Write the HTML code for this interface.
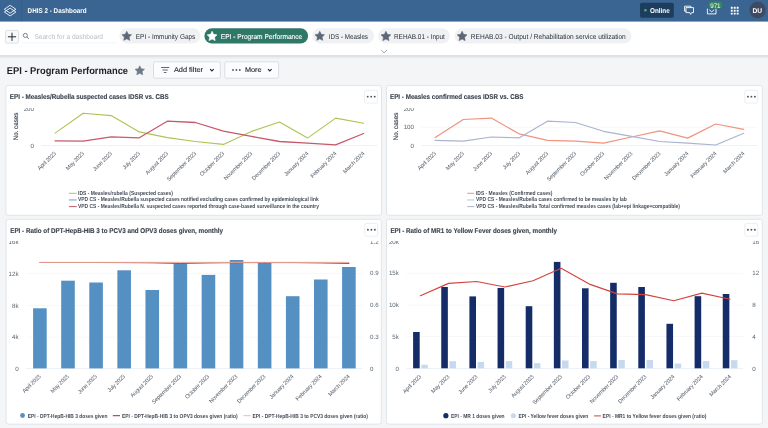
<!DOCTYPE html><html><head><meta charset="utf-8"><title>DHIS 2 - Dashboard</title><style>html,body{margin:0;padding:0;background:#f4f5f7;width:768px;height:428px;overflow:hidden}svg{display:block;will-change:transform;text-rendering:geometricPrecision;font-family:"Liberation Sans",sans-serif}</style></head><body>
<svg width="768" height="428" viewBox="0 0 768 428">
<rect x="0" y="0" width="768" height="428" fill="#f4f5f7"/>
<rect x="0" y="0" width="768" height="21.75" fill="#3a6592"/>
<g fill="none" stroke="#ffffff" stroke-width="0.85" stroke-linejoin="round"><path d="M10.1,5.3 L15.9,9.25 L10.1,13.2 L4.3,9.25 Z"/><path d="M10.1,8.1 L15.9,12.0 L10.1,15.9 L4.3,12.0 Z"/></g>
<line x1="21.5" y1="0" x2="21.5" y2="21.75" stroke="#22557d" stroke-width="0.6" stroke-dasharray="0.8,0.8"/>
<text x="27.60" y="13.00" font-size="7" fill="#ffffff" font-weight="bold" text-anchor="start" textLength="59.00" lengthAdjust="spacingAndGlyphs" >DHIS 2 - Dashboard</text>
<rect x="640" y="2.7" width="33.8" height="15.1" rx="1.8" fill="#1c3d5e"/>
<circle cx="645.4" cy="10.3" r="1.25" fill="#4caf7d"/>
<text x="650.00" y="12.80" font-size="7" fill="#ffffff" font-weight="bold" text-anchor="start" textLength="19.70" lengthAdjust="spacingAndGlyphs" >Online</text>
<g fill="none" stroke="#ffffff" stroke-width="0.9" stroke-linejoin="round"><path d="M684.6,6.2 H690.9 V7.3"/><path d="M686.0,7.6 H693.5 V12.6 H691.6 L690.6,14.4 L689.8,12.6 H686.0 Z"/><path d="M684.6,6.2 V11.2 H686.0"/></g>
<g fill="none" stroke="#ffffff" stroke-width="0.9" stroke-linejoin="round"><path d="M707.4,8.6 V13.9 H716.0 V8.6"/><path d="M709.3,9.8 L711.7,11.8 L714.1,9.8"/></g>
<rect x="708.6" y="1.6" width="13.6" height="6.8" rx="3.4" fill="#37865c"/>
<text x="715.40" y="7.50" font-size="6.6" fill="#ffffff" text-anchor="middle" textLength="10.40" lengthAdjust="spacingAndGlyphs" >971</text>
<rect x="730.80" y="6.80" width="1.9" height="1.9" rx="0.3" fill="#ffffff"/>
<rect x="730.80" y="9.75" width="1.9" height="1.9" rx="0.3" fill="#ffffff"/>
<rect x="730.80" y="12.70" width="1.9" height="1.9" rx="0.3" fill="#ffffff"/>
<rect x="733.75" y="6.80" width="1.9" height="1.9" rx="0.3" fill="#ffffff"/>
<rect x="733.75" y="9.75" width="1.9" height="1.9" rx="0.3" fill="#ffffff"/>
<rect x="733.75" y="12.70" width="1.9" height="1.9" rx="0.3" fill="#ffffff"/>
<rect x="736.70" y="6.80" width="1.9" height="1.9" rx="0.3" fill="#ffffff"/>
<rect x="736.70" y="9.75" width="1.9" height="1.9" rx="0.3" fill="#ffffff"/>
<rect x="736.70" y="12.70" width="1.9" height="1.9" rx="0.3" fill="#ffffff"/>
<circle cx="757.6" cy="10.1" r="8.25" fill="#3e4a64"/>
<text x="757.30" y="12.55" font-size="6.8" fill="#ffffff" font-weight="bold" text-anchor="middle" textLength="9.60" lengthAdjust="spacingAndGlyphs" >DU</text>
<rect x="0" y="21.75" width="768" height="33.65" fill="#ffffff"/>
<rect x="0" y="55.4" width="768" height="1.0" fill="#cdd1d6"/>
<rect x="0" y="56.4" width="768" height="1.0" fill="#dcdfe3"/>
<rect x="0" y="57.4" width="768" height="1.0" fill="#e9ecef"/>
<rect x="5.5" y="30.35" width="13.0" height="12.8" rx="1.6" fill="#f8f9fa" stroke="#c9cfd6" stroke-width="0.6"/>
<path d="M12.0,32.7 V40.9 M7.9,36.8 H16.1" stroke="#212934" stroke-width="1.0"/>
<g fill="none" stroke="#6b7480" stroke-width="0.9"><circle cx="25.35" cy="35.4" r="2.05"/><path d="M26.85,36.9 L28.9,38.95"/></g>
<text x="34.40" y="38.80" font-size="7.0" fill="#b8bdc4" text-anchor="start" textLength="68.60" lengthAdjust="spacingAndGlyphs" >Search for a dashboard</text>
<rect x="22" y="42.6" width="95" height="0.6" fill="#e8edf2"/>
<rect x="119.4" y="28.3" width="81.10" height="15.30" rx="7.65" fill="#eff1f3"/>
<path d="M126.75,31.30 L128.22,34.27 L131.50,34.75 L129.12,37.07 L129.69,40.33 L126.75,38.79 L123.81,40.33 L124.38,37.07 L122.00,34.75 L125.28,34.27Z" fill="#5d6777" stroke="#5d6777" stroke-width="0.6" stroke-linejoin="round"/>
<text x="135.80" y="38.75" font-size="7.1" fill="#28303a" text-anchor="start" textLength="59.50" lengthAdjust="spacingAndGlyphs" >EPI - Immunity Gaps</text>
<rect x="204.4" y="28.3" width="103.70" height="15.30" rx="7.65" fill="#2f7867"/>
<path d="M212.10,31.30 L213.61,34.37 L217.00,34.86 L214.55,37.25 L215.13,40.62 L212.10,39.03 L209.07,40.62 L209.65,37.25 L207.20,34.86 L210.59,34.37Z" fill="#ffffff" stroke="#ffffff" stroke-width="0.6" stroke-linejoin="round"/>
<text x="220.80" y="38.75" font-size="7.1" fill="#ffffff" stroke="#ffffff" stroke-width="0.12" text-anchor="start" textLength="81.40" lengthAdjust="spacingAndGlyphs" >EPI - Program Performance</text>
<rect x="312.4" y="28.3" width="61.60" height="15.30" rx="7.65" fill="#eff1f3"/>
<path d="M319.75,31.30 L321.22,34.27 L324.50,34.75 L322.12,37.07 L322.69,40.33 L319.75,38.79 L316.81,40.33 L317.38,37.07 L315.00,34.75 L318.28,34.27Z" fill="#5d6777" stroke="#5d6777" stroke-width="0.6" stroke-linejoin="round"/>
<text x="328.80" y="38.75" font-size="7.1" fill="#28303a" text-anchor="start" textLength="39.20" lengthAdjust="spacingAndGlyphs" >IDS - Measles</text>
<rect x="378.2" y="28.3" width="71.50" height="15.30" rx="7.65" fill="#eff1f3"/>
<path d="M385.90,31.30 L387.41,34.37 L390.80,34.86 L388.35,37.25 L388.93,40.62 L385.90,39.03 L382.87,40.62 L383.45,37.25 L381.00,34.86 L384.39,34.37Z" fill="#5d6777" stroke="#5d6777" stroke-width="0.6" stroke-linejoin="round"/>
<text x="394.00" y="38.75" font-size="7.1" fill="#28303a" text-anchor="start" textLength="50.90" lengthAdjust="spacingAndGlyphs" >REHAB.01 - Input</text>
<rect x="454.7" y="28.3" width="176.80" height="15.30" rx="7.65" fill="#eff1f3"/>
<path d="M462.10,31.30 L463.61,34.37 L467.00,34.86 L464.55,37.25 L465.13,40.62 L462.10,39.03 L459.07,40.62 L459.65,37.25 L457.20,34.86 L460.59,34.37Z" fill="#5d6777" stroke="#5d6777" stroke-width="0.6" stroke-linejoin="round"/>
<text x="470.80" y="38.75" font-size="7.1" fill="#28303a" text-anchor="start" textLength="155.00" lengthAdjust="spacingAndGlyphs" >REHAB.03 - Output / Rehabilitation service utilization</text>
<path d="M381.2,50.0 L384.1,52.9 L387.0,50.0" fill="none" stroke="#8190a0" stroke-width="0.8"/>
<text x="6.80" y="73.90" font-size="10.0" fill="#1b2027" font-weight="bold" text-anchor="start" textLength="121.20" lengthAdjust="spacingAndGlyphs" >EPI - Program Performance</text>
<path d="M139.75,65.80 L141.22,68.77 L144.50,69.25 L142.12,71.57 L142.69,74.83 L139.75,73.29 L136.81,74.83 L137.38,71.57 L135.00,69.25 L138.28,68.77Z" fill="#6e7a8a" stroke="#6e7a8a" stroke-width="0.6" stroke-linejoin="round"/>
<rect x="153.5" y="61.8" width="66.8" height="16.4" rx="1.8" fill="#fbfcfd" stroke="#c5ccd4" stroke-width="0.6"/>
<path d="M161.1,67.5 H169.2 M162.5,70.0 H167.8 M163.9,72.5 H166.4" stroke="#4a5768" stroke-width="0.9"/>
<text x="173.90" y="72.30" font-size="7.0" fill="#212934" stroke="#212934" stroke-width="0.12" text-anchor="start" textLength="29.10" lengthAdjust="spacingAndGlyphs" >Add filter</text>
<path d="M210.1,69.1 L211.9,70.9 L213.7,69.1" fill="none" stroke="#212934" stroke-width="1.15"/>
<rect x="224.8" y="61.8" width="53.8" height="16.4" rx="1.8" fill="#fbfcfd" stroke="#c5ccd4" stroke-width="0.6"/>
<circle cx="233.00" cy="70.0" r="0.9" fill="#4a5768"/>
<circle cx="236.40" cy="70.0" r="0.9" fill="#4a5768"/>
<circle cx="239.80" cy="70.0" r="0.9" fill="#4a5768"/>
<text x="245.00" y="72.30" font-size="7.0" fill="#212934" stroke="#212934" stroke-width="0.12" text-anchor="start" textLength="16.60" lengthAdjust="spacingAndGlyphs" >More</text>
<path d="M268.0,69.1 L269.8,70.9 L271.6,69.1" fill="none" stroke="#212934" stroke-width="1.15"/>
<rect x="5.90" y="85.60" width="375.60" height="129.70" rx="2.2" fill="#ffffff" stroke="#dcdfe3" stroke-width="0.8"/>
<text x="9.80" y="99.35" font-size="7.0" fill="#3a424d" font-weight="bold" text-anchor="start" textLength="158.90" lengthAdjust="spacingAndGlyphs" stroke="#3a424d" stroke-width="0.12">EPI - Measles/Rubella suspected cases IDSR vs. CBS</text>
<rect x="364.50" y="90.25" width="13.0" height="12.8" rx="1.8" fill="#ffffff" stroke="#dde2e8" stroke-width="0.6"/>
<circle cx="367.70" cy="96.65" r="0.95" fill="#4d5763"/>
<circle cx="371.20" cy="96.65" r="0.95" fill="#4d5763"/>
<circle cx="374.70" cy="96.65" r="0.95" fill="#4d5763"/>
<rect x="386.50" y="85.60" width="375.90" height="129.70" rx="2.2" fill="#ffffff" stroke="#dcdfe3" stroke-width="0.8"/>
<text x="390.00" y="99.35" font-size="7.0" fill="#3a424d" font-weight="bold" text-anchor="start" textLength="133.40" lengthAdjust="spacingAndGlyphs" stroke="#3a424d" stroke-width="0.12">EPI - Measles confirmed cases IDSR vs. CBS</text>
<rect x="744.70" y="90.25" width="13.0" height="12.8" rx="1.8" fill="#ffffff" stroke="#dde2e8" stroke-width="0.6"/>
<circle cx="747.90" cy="96.65" r="0.95" fill="#4d5763"/>
<circle cx="751.40" cy="96.65" r="0.95" fill="#4d5763"/>
<circle cx="754.90" cy="96.65" r="0.95" fill="#4d5763"/>
<rect x="6.10" y="219.30" width="375.20" height="204.80" rx="2.2" fill="#ffffff" stroke="#dcdfe3" stroke-width="0.8"/>
<text x="10.20" y="233.00" font-size="7.0" fill="#3a424d" font-weight="bold" text-anchor="start" textLength="212.80" lengthAdjust="spacingAndGlyphs" stroke="#3a424d" stroke-width="0.12">EPI - Ratio of DPT-HepB-HIB 3 to PCV3 and OPV3 doses given, monthly</text>
<rect x="364.70" y="223.40" width="13.0" height="12.8" rx="1.8" fill="#ffffff" stroke="#dde2e8" stroke-width="0.6"/>
<circle cx="367.90" cy="229.80" r="0.95" fill="#4d5763"/>
<circle cx="371.40" cy="229.80" r="0.95" fill="#4d5763"/>
<circle cx="374.90" cy="229.80" r="0.95" fill="#4d5763"/>
<rect x="386.50" y="219.30" width="375.90" height="204.80" rx="2.2" fill="#ffffff" stroke="#dcdfe3" stroke-width="0.8"/>
<text x="390.40" y="233.00" font-size="7.0" fill="#3a424d" font-weight="bold" text-anchor="start" textLength="166.50" lengthAdjust="spacingAndGlyphs" stroke="#3a424d" stroke-width="0.12">EPI - Ratio of MR1 to Yellow Fever doses given, monthly</text>
<rect x="744.70" y="223.40" width="13.0" height="12.8" rx="1.8" fill="#ffffff" stroke="#dde2e8" stroke-width="0.6"/>
<circle cx="747.90" cy="229.80" r="0.95" fill="#4d5763"/>
<circle cx="751.40" cy="229.80" r="0.95" fill="#4d5763"/>
<circle cx="754.90" cy="229.80" r="0.95" fill="#4d5763"/>
<clipPath id="c1"><rect x="6" y="108.0" width="375" height="106"/></clipPath>
<clipPath id="c2"><rect x="387" y="108.0" width="375" height="106"/></clipPath>
<clipPath id="c3"><rect x="6" y="241.1" width="375" height="182"/></clipPath>
<clipPath id="c4"><rect x="387" y="241.1" width="375" height="182"/></clipPath>
<g clip-path="url(#c1)">
<rect x="41.1" y="145.2" width="336.5" height="0.6" fill="#e3e9f1"/>
<text x="34.00" y="148.00" font-size="6.2" fill="#5c6671" text-anchor="end" >0</text>
<text x="34.00" y="111.00" font-size="6.2" fill="#5c6671" text-anchor="end" >200</text>
<text x="18.2" y="126.5" font-size="6.6" fill="#3f4853" stroke="#3f4853" stroke-width="0.15" text-anchor="middle" transform="rotate(-90 18.2 126.5)" textLength="27.6" lengthAdjust="spacingAndGlyphs">No. cases</text>
<path d="M55.10,133.10 L83.15,113.20 L111.20,115.60 L139.25,131.90 L167.30,137.60 L195.35,141.50 L223.40,144.40 L251.45,131.40 L279.50,122.00 L307.55,138.10 L335.60,118.10 L363.65,123.30" fill="none" stroke="#afc455" stroke-width="1.15" stroke-linejoin="round" stroke-linecap="round" />
<path d="M55.10,140.90 L83.15,141.20 L111.20,136.80 L139.25,137.80 L167.30,121.20 L195.35,122.50 L223.40,131.20 L251.45,136.40 L279.50,141.50 L307.55,143.20 L335.60,144.80 L363.65,133.50" fill="none" stroke="#c65a68" stroke-width="1.3" stroke-linejoin="round" stroke-linecap="round" />
</g>
<text x="0" y="0" font-size="5.7" letter-spacing="-0.22" fill="#525c68" text-anchor="end" transform="translate(56.30 154.00) rotate(-45)">April 2023</text>
<text x="0" y="0" font-size="5.7" letter-spacing="-0.22" fill="#525c68" text-anchor="end" transform="translate(84.35 154.00) rotate(-45)">May 2023</text>
<text x="0" y="0" font-size="5.7" letter-spacing="-0.22" fill="#525c68" text-anchor="end" transform="translate(112.40 154.00) rotate(-45)">June 2023</text>
<text x="0" y="0" font-size="5.7" letter-spacing="-0.22" fill="#525c68" text-anchor="end" transform="translate(140.45 154.00) rotate(-45)">July 2023</text>
<text x="0" y="0" font-size="5.7" letter-spacing="-0.22" fill="#525c68" text-anchor="end" transform="translate(168.50 154.00) rotate(-45)">August 2023</text>
<text x="0" y="0" font-size="5.7" letter-spacing="-0.22" fill="#525c68" text-anchor="end" transform="translate(196.55 154.00) rotate(-45)">September 2023</text>
<text x="0" y="0" font-size="5.7" letter-spacing="-0.22" fill="#525c68" text-anchor="end" transform="translate(224.60 154.00) rotate(-45)">October 2023</text>
<text x="0" y="0" font-size="5.7" letter-spacing="-0.22" fill="#525c68" text-anchor="end" transform="translate(252.65 154.00) rotate(-45)">November 2023</text>
<text x="0" y="0" font-size="5.7" letter-spacing="-0.22" fill="#525c68" text-anchor="end" transform="translate(280.70 154.00) rotate(-45)">December 2023</text>
<text x="0" y="0" font-size="5.7" letter-spacing="-0.22" fill="#525c68" text-anchor="end" transform="translate(308.75 154.00) rotate(-45)">January 2024</text>
<text x="0" y="0" font-size="5.7" letter-spacing="-0.22" fill="#525c68" text-anchor="end" transform="translate(336.80 154.00) rotate(-45)">February 2024</text>
<text x="0" y="0" font-size="5.7" letter-spacing="-0.22" fill="#525c68" text-anchor="end" transform="translate(364.85 154.00) rotate(-45)">March 2024</text>
<rect x="68.9" y="192.80" width="7.8" height="1.0" fill="#afc455"/>
<text x="78.00" y="194.80" font-size="5.75" fill="#434d59" font-weight="bold" text-anchor="start" textLength="95.00" lengthAdjust="spacingAndGlyphs" >IDS - Measles/rubella (Suspected cases)</text>
<rect x="68.9" y="199.45" width="7.8" height="1.0" fill="#6f9bd0"/>
<text x="78.00" y="201.45" font-size="5.75" fill="#434d59" font-weight="bold" text-anchor="start" textLength="240.70" lengthAdjust="spacingAndGlyphs" >VPD CS - Measles/Rubella suspected cases notified excluding cases confirmed by epidemiological link</text>
<rect x="68.9" y="206.10" width="7.8" height="1.0" fill="#c65a68"/>
<text x="78.00" y="208.10" font-size="5.75" fill="#434d59" font-weight="bold" text-anchor="start" textLength="241.00" lengthAdjust="spacingAndGlyphs" >VPD CS - Measles/Rubella N. suspected cases reported through case-based surveillance in the country</text>
<g clip-path="url(#c2)">
<rect x="421.2" y="126.9" width="336.6" height="0.5" fill="#eef0f3"/>
<rect x="421.2" y="145.2" width="336.6" height="0.6" fill="#e3e9f1"/>
<text x="414.00" y="148.00" font-size="6.2" fill="#5c6671" text-anchor="end" >0</text>
<text x="414.00" y="129.20" font-size="6.2" fill="#5c6671" text-anchor="end" >100</text>
<text x="414.00" y="111.00" font-size="6.2" fill="#5c6671" text-anchor="end" >200</text>
<text x="398.0" y="126.5" font-size="6.6" fill="#3f4853" stroke="#3f4853" stroke-width="0.15" text-anchor="middle" transform="rotate(-90 398.0 126.5)" textLength="27.6" lengthAdjust="spacingAndGlyphs">No. cases</text>
<path d="M435.20,137.60 L463.25,119.50 L491.30,118.10 L519.35,133.90 L547.40,140.30 L575.45,141.20 L603.50,143.20 L631.55,137.00 L659.60,130.80 L687.65,138.10 L715.70,124.00 L743.75,129.40" fill="none" stroke="#f0937f" stroke-width="1.2" stroke-linejoin="round" stroke-linecap="round" />
<path d="M435.20,140.40 L463.25,141.20 L491.30,137.00 L519.35,137.80 L547.40,121.20 L575.45,122.50 L603.50,131.30 L631.55,136.40 L659.60,141.50 L687.65,143.20 L715.70,145.00 L743.75,133.30" fill="none" stroke="#abb4cf" stroke-width="1.2" stroke-linejoin="round" stroke-linecap="round" />
</g>
<text x="0" y="0" font-size="5.7" letter-spacing="-0.22" fill="#525c68" text-anchor="end" transform="translate(436.40 154.00) rotate(-45)">April 2023</text>
<text x="0" y="0" font-size="5.7" letter-spacing="-0.22" fill="#525c68" text-anchor="end" transform="translate(464.45 154.00) rotate(-45)">May 2023</text>
<text x="0" y="0" font-size="5.7" letter-spacing="-0.22" fill="#525c68" text-anchor="end" transform="translate(492.50 154.00) rotate(-45)">June 2023</text>
<text x="0" y="0" font-size="5.7" letter-spacing="-0.22" fill="#525c68" text-anchor="end" transform="translate(520.55 154.00) rotate(-45)">July 2023</text>
<text x="0" y="0" font-size="5.7" letter-spacing="-0.22" fill="#525c68" text-anchor="end" transform="translate(548.60 154.00) rotate(-45)">August 2023</text>
<text x="0" y="0" font-size="5.7" letter-spacing="-0.22" fill="#525c68" text-anchor="end" transform="translate(576.65 154.00) rotate(-45)">September 2023</text>
<text x="0" y="0" font-size="5.7" letter-spacing="-0.22" fill="#525c68" text-anchor="end" transform="translate(604.70 154.00) rotate(-45)">October 2023</text>
<text x="0" y="0" font-size="5.7" letter-spacing="-0.22" fill="#525c68" text-anchor="end" transform="translate(632.75 154.00) rotate(-45)">November 2023</text>
<text x="0" y="0" font-size="5.7" letter-spacing="-0.22" fill="#525c68" text-anchor="end" transform="translate(660.80 154.00) rotate(-45)">December 2023</text>
<text x="0" y="0" font-size="5.7" letter-spacing="-0.22" fill="#525c68" text-anchor="end" transform="translate(688.85 154.00) rotate(-45)">January 2024</text>
<text x="0" y="0" font-size="5.7" letter-spacing="-0.22" fill="#525c68" text-anchor="end" transform="translate(716.90 154.00) rotate(-45)">February 2024</text>
<text x="0" y="0" font-size="5.7" letter-spacing="-0.22" fill="#525c68" text-anchor="end" transform="translate(744.95 154.00) rotate(-45)">March 2024</text>
<rect x="467.2" y="192.80" width="7.0" height="1.0" fill="#f0937f"/>
<text x="476.00" y="194.80" font-size="5.75" fill="#434d59" font-weight="bold" text-anchor="start" textLength="76.30" lengthAdjust="spacingAndGlyphs" >IDS - Measles (Confirmed cases)</text>
<rect x="467.2" y="199.45" width="7.0" height="1.0" fill="#a9cbe8"/>
<text x="476.00" y="201.45" font-size="5.75" fill="#434d59" font-weight="bold" text-anchor="start" textLength="150.80" lengthAdjust="spacingAndGlyphs" >VPD CS - Measles/Rubella cases confirmed to be measles by lab</text>
<rect x="467.2" y="206.10" width="7.0" height="1.0" fill="#abb4cf"/>
<text x="476.00" y="208.10" font-size="5.75" fill="#434d59" font-weight="bold" text-anchor="start" textLength="204.00" lengthAdjust="spacingAndGlyphs" >VPD CS - Measles/Rubella Total confirmed measles cases (lab+epi linkage+compatible)</text>
<g clip-path="url(#c3)">
<rect x="25.8" y="273.25" width="337" height="0.5" fill="#eef0f3"/>
<rect x="25.8" y="305.15" width="337" height="0.5" fill="#eef0f3"/>
<rect x="25.8" y="336.85" width="337" height="0.5" fill="#eef0f3"/>
<rect x="25.8" y="368.10" width="337" height="0.6" fill="#e3e9f1"/>
<text x="18.60" y="243.90" font-size="6.2" fill="#5c6671" text-anchor="end" >16k</text>
<text x="18.60" y="275.50" font-size="6.2" fill="#5c6671" text-anchor="end" >12k</text>
<text x="18.60" y="307.50" font-size="6.2" fill="#5c6671" text-anchor="end" >8k</text>
<text x="18.60" y="339.20" font-size="6.2" fill="#5c6671" text-anchor="end" >4k</text>
<text x="18.60" y="370.80" font-size="6.2" fill="#5c6671" text-anchor="end" >0</text>
<text x="370.00" y="243.90" font-size="6.2" fill="#5c6671" text-anchor="start" >1.2</text>
<text x="370.00" y="274.90" font-size="6.2" fill="#5c6671" text-anchor="start" >0.9</text>
<text x="370.00" y="307.40" font-size="6.2" fill="#5c6671" text-anchor="start" >0.6</text>
<text x="370.00" y="339.30" font-size="6.2" fill="#5c6671" text-anchor="start" >0.3</text>
<text x="370.00" y="371.20" font-size="6.2" fill="#5c6671" text-anchor="start" >0</text>
<rect x="33.10" y="308.30" width="13.6" height="60.10" fill="#5590c2"/>
<rect x="61.19" y="280.70" width="13.6" height="87.70" fill="#5590c2"/>
<rect x="89.28" y="282.50" width="13.6" height="85.90" fill="#5590c2"/>
<rect x="117.37" y="270.30" width="13.6" height="98.10" fill="#5590c2"/>
<rect x="145.46" y="290.00" width="13.6" height="78.40" fill="#5590c2"/>
<rect x="173.55" y="263.70" width="13.6" height="104.70" fill="#5590c2"/>
<rect x="201.64" y="274.90" width="13.6" height="93.50" fill="#5590c2"/>
<rect x="229.73" y="260.00" width="13.6" height="108.40" fill="#5590c2"/>
<rect x="257.82" y="262.20" width="13.6" height="106.20" fill="#5590c2"/>
<rect x="285.91" y="296.20" width="13.6" height="72.20" fill="#5590c2"/>
<rect x="314.00" y="279.50" width="13.6" height="88.90" fill="#5590c2"/>
<rect x="342.09" y="267.00" width="13.6" height="101.40" fill="#5590c2"/>
<path d="M39.90,262.50 L67.99,262.50 L96.08,262.50 L124.17,262.60 L152.26,262.80 L180.35,263.40 L208.44,262.90 L236.53,262.60 L264.62,262.60 L292.71,262.60 L320.80,262.90 L348.89,263.40" fill="none" stroke="#8e3232" stroke-width="0.95" stroke-linejoin="round" stroke-linecap="round" />
<path d="M39.90,262.35 L67.99,262.35 L96.08,262.35 L124.17,262.35 L152.26,262.35 L180.35,262.35 L208.44,262.35 L236.53,262.35 L264.62,262.35 L292.71,262.35 L320.80,262.35 L348.89,262.35" fill="none" stroke="#eca89b" stroke-width="1.0" stroke-linejoin="round" stroke-linecap="round" />
</g>
<text x="0" y="0" font-size="5.7" letter-spacing="-0.22" fill="#525c68" text-anchor="end" transform="translate(41.10 376.80) rotate(-45)">April 2023</text>
<text x="0" y="0" font-size="5.7" letter-spacing="-0.22" fill="#525c68" text-anchor="end" transform="translate(69.19 376.80) rotate(-45)">May 2023</text>
<text x="0" y="0" font-size="5.7" letter-spacing="-0.22" fill="#525c68" text-anchor="end" transform="translate(97.28 376.80) rotate(-45)">June 2023</text>
<text x="0" y="0" font-size="5.7" letter-spacing="-0.22" fill="#525c68" text-anchor="end" transform="translate(125.37 376.80) rotate(-45)">July 2023</text>
<text x="0" y="0" font-size="5.7" letter-spacing="-0.22" fill="#525c68" text-anchor="end" transform="translate(153.46 376.80) rotate(-45)">August 2023</text>
<text x="0" y="0" font-size="5.7" letter-spacing="-0.22" fill="#525c68" text-anchor="end" transform="translate(181.55 376.80) rotate(-45)">September 2023</text>
<text x="0" y="0" font-size="5.7" letter-spacing="-0.22" fill="#525c68" text-anchor="end" transform="translate(209.64 376.80) rotate(-45)">October 2023</text>
<text x="0" y="0" font-size="5.7" letter-spacing="-0.22" fill="#525c68" text-anchor="end" transform="translate(237.73 376.80) rotate(-45)">November 2023</text>
<text x="0" y="0" font-size="5.7" letter-spacing="-0.22" fill="#525c68" text-anchor="end" transform="translate(265.82 376.80) rotate(-45)">December 2023</text>
<text x="0" y="0" font-size="5.7" letter-spacing="-0.22" fill="#525c68" text-anchor="end" transform="translate(293.91 376.80) rotate(-45)">January 2024</text>
<text x="0" y="0" font-size="5.7" letter-spacing="-0.22" fill="#525c68" text-anchor="end" transform="translate(322.00 376.80) rotate(-45)">February 2024</text>
<text x="0" y="0" font-size="5.7" letter-spacing="-0.22" fill="#525c68" text-anchor="end" transform="translate(350.09 376.80) rotate(-45)">March 2024</text>
<circle cx="22.55" cy="415.5" r="2.4" fill="#5590c2"/>
<text x="27.80" y="417.50" font-size="5.75" fill="#434d59" font-weight="bold" text-anchor="start" textLength="79.70" lengthAdjust="spacingAndGlyphs" >EPI - DPT-HepB-HIB 3 doses given</text>
<rect x="112.8" y="415.2" width="7.2" height="1.0" fill="#8e3232"/>
<text x="121.90" y="417.50" font-size="5.75" fill="#434d59" font-weight="bold" text-anchor="start" textLength="115.70" lengthAdjust="spacingAndGlyphs" >EPI - DPT-HepB-HIB 3 to OPV3 doses given (ratio)</text>
<rect x="243.4" y="415.2" width="7.2" height="1.0" fill="#f4b6ad"/>
<text x="252.60" y="417.50" font-size="5.75" fill="#434d59" font-weight="bold" text-anchor="start" textLength="115.20" lengthAdjust="spacingAndGlyphs" >EPI - DPT-HepB-HIB 3 to PCV3 doses given (ratio)</text>
<g clip-path="url(#c4)">
<rect x="406.3" y="273.15" width="336.7" height="0.5" fill="#eef0f3"/>
<rect x="406.3" y="304.85" width="336.7" height="0.5" fill="#eef0f3"/>
<rect x="406.3" y="336.35" width="336.7" height="0.5" fill="#eef0f3"/>
<rect x="406.3" y="368.00" width="336.7" height="0.6" fill="#e3e9f1"/>
<text x="398.90" y="243.90" font-size="6.2" fill="#5c6671" text-anchor="end" >20k</text>
<text x="398.90" y="275.40" font-size="6.2" fill="#5c6671" text-anchor="end" >15k</text>
<text x="398.90" y="307.40" font-size="6.2" fill="#5c6671" text-anchor="end" >10k</text>
<text x="398.90" y="338.70" font-size="6.2" fill="#5c6671" text-anchor="end" >5k</text>
<text x="398.90" y="370.80" font-size="6.2" fill="#5c6671" text-anchor="end" >0</text>
<text x="752.20" y="243.90" font-size="6.2" fill="#5c6671" text-anchor="start" >16</text>
<text x="752.20" y="274.90" font-size="6.2" fill="#5c6671" text-anchor="start" >12</text>
<text x="752.20" y="307.40" font-size="6.2" fill="#5c6671" text-anchor="start" >8</text>
<text x="752.20" y="339.30" font-size="6.2" fill="#5c6671" text-anchor="start" >4</text>
<text x="752.20" y="371.10" font-size="6.2" fill="#5c6671" text-anchor="start" >0</text>
<rect x="413.10" y="332.00" width="6.6" height="36.30" fill="#142d69"/>
<rect x="421.30" y="364.70" width="6.5" height="3.60" fill="#c7d9ee"/>
<rect x="441.25" y="287.00" width="6.6" height="81.30" fill="#142d69"/>
<rect x="449.45" y="361.20" width="6.5" height="7.10" fill="#c7d9ee"/>
<rect x="469.40" y="296.40" width="6.6" height="71.90" fill="#142d69"/>
<rect x="477.60" y="362.00" width="6.5" height="6.30" fill="#c7d9ee"/>
<rect x="497.55" y="288.00" width="6.6" height="80.30" fill="#142d69"/>
<rect x="505.75" y="361.10" width="6.5" height="7.20" fill="#c7d9ee"/>
<rect x="525.70" y="306.20" width="6.6" height="62.10" fill="#142d69"/>
<rect x="533.90" y="363.20" width="6.5" height="5.10" fill="#c7d9ee"/>
<rect x="553.85" y="261.90" width="6.6" height="106.40" fill="#142d69"/>
<rect x="562.05" y="360.50" width="6.5" height="7.80" fill="#c7d9ee"/>
<rect x="582.00" y="288.30" width="6.6" height="80.00" fill="#142d69"/>
<rect x="590.20" y="361.10" width="6.5" height="7.20" fill="#c7d9ee"/>
<rect x="610.15" y="282.80" width="6.6" height="85.50" fill="#142d69"/>
<rect x="618.35" y="360.00" width="6.5" height="8.30" fill="#c7d9ee"/>
<rect x="638.30" y="287.00" width="6.6" height="81.30" fill="#142d69"/>
<rect x="646.50" y="360.00" width="6.5" height="8.30" fill="#c7d9ee"/>
<rect x="666.45" y="323.80" width="6.6" height="44.50" fill="#142d69"/>
<rect x="674.65" y="363.60" width="6.5" height="4.70" fill="#c7d9ee"/>
<rect x="694.60" y="296.20" width="6.6" height="72.10" fill="#142d69"/>
<rect x="702.80" y="361.10" width="6.5" height="7.20" fill="#c7d9ee"/>
<rect x="722.75" y="294.00" width="6.6" height="74.30" fill="#142d69"/>
<rect x="730.95" y="360.20" width="6.5" height="8.10" fill="#c7d9ee"/>
<path d="M420.40,295.70 L448.55,283.40 L476.70,281.50 L504.85,287.00 L533.00,280.70 L561.15,268.20 L589.30,284.10 L617.45,293.90 L645.60,294.60 L673.75,300.70 L701.90,293.10 L730.05,299.20" fill="none" stroke="#d2443f" stroke-width="1.15" stroke-linejoin="round" stroke-linecap="round" />
</g>
<text x="0" y="0" font-size="5.7" letter-spacing="-0.22" fill="#525c68" text-anchor="end" transform="translate(421.60 377.10) rotate(-45)">April 2023</text>
<text x="0" y="0" font-size="5.7" letter-spacing="-0.22" fill="#525c68" text-anchor="end" transform="translate(449.75 377.10) rotate(-45)">May 2023</text>
<text x="0" y="0" font-size="5.7" letter-spacing="-0.22" fill="#525c68" text-anchor="end" transform="translate(477.90 377.10) rotate(-45)">June 2023</text>
<text x="0" y="0" font-size="5.7" letter-spacing="-0.22" fill="#525c68" text-anchor="end" transform="translate(506.05 377.10) rotate(-45)">July 2023</text>
<text x="0" y="0" font-size="5.7" letter-spacing="-0.22" fill="#525c68" text-anchor="end" transform="translate(534.20 377.10) rotate(-45)">August 2023</text>
<text x="0" y="0" font-size="5.7" letter-spacing="-0.22" fill="#525c68" text-anchor="end" transform="translate(562.35 377.10) rotate(-45)">September 2023</text>
<text x="0" y="0" font-size="5.7" letter-spacing="-0.22" fill="#525c68" text-anchor="end" transform="translate(590.50 377.10) rotate(-45)">October 2023</text>
<text x="0" y="0" font-size="5.7" letter-spacing="-0.22" fill="#525c68" text-anchor="end" transform="translate(618.65 377.10) rotate(-45)">November 2023</text>
<text x="0" y="0" font-size="5.7" letter-spacing="-0.22" fill="#525c68" text-anchor="end" transform="translate(646.80 377.10) rotate(-45)">December 2023</text>
<text x="0" y="0" font-size="5.7" letter-spacing="-0.22" fill="#525c68" text-anchor="end" transform="translate(674.95 377.10) rotate(-45)">January 2024</text>
<text x="0" y="0" font-size="5.7" letter-spacing="-0.22" fill="#525c68" text-anchor="end" transform="translate(703.10 377.10) rotate(-45)">February 2024</text>
<text x="0" y="0" font-size="5.7" letter-spacing="-0.22" fill="#525c68" text-anchor="end" transform="translate(731.25 377.10) rotate(-45)">March 2024</text>
<circle cx="445.9" cy="415.7" r="2.6" fill="#142d69"/>
<text x="451.00" y="417.70" font-size="5.75" fill="#434d59" font-weight="bold" text-anchor="start" textLength="53.60" lengthAdjust="spacingAndGlyphs" >EPI - MR 1 doses given</text>
<circle cx="513.4" cy="415.7" r="2.5" fill="#c7d9ee"/>
<text x="518.50" y="417.70" font-size="5.75" fill="#434d59" font-weight="bold" text-anchor="start" textLength="69.80" lengthAdjust="spacingAndGlyphs" >EPI - Yellow fever doses given</text>
<rect x="594.0" y="415.4" width="6.9" height="1.0" fill="#d2443f"/>
<text x="602.60" y="417.70" font-size="5.75" fill="#434d59" font-weight="bold" text-anchor="start" textLength="103.70" lengthAdjust="spacingAndGlyphs" >EPI - MR1 to Yellow fever doses given (ratio)</text>
</svg></body></html>
